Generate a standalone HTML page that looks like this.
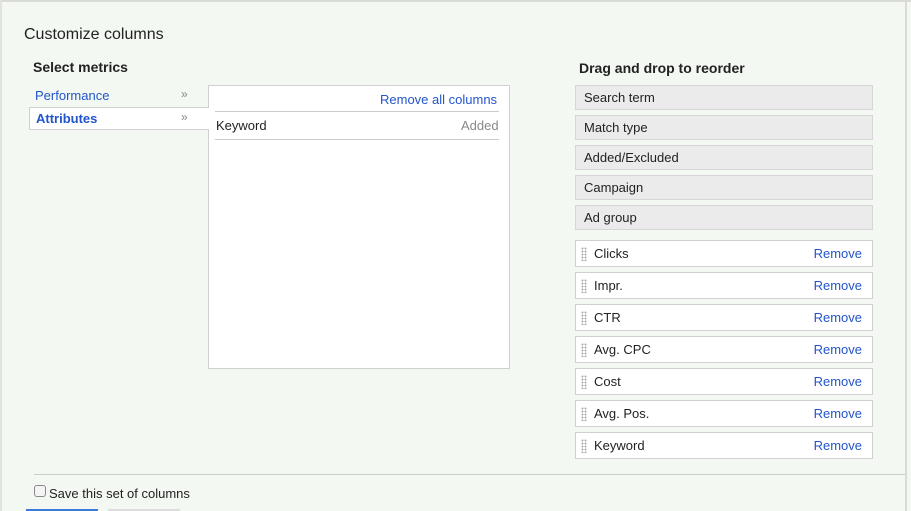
<!DOCTYPE html>
<html><head><style>
body{margin:0;width:911px;height:511px;overflow:hidden;background:#f4f8f2;font-family:"Liberation Sans",Arial,sans-serif;position:relative;font-size:13px;color:#222}
div{position:absolute;box-sizing:border-box}
.g{left:575px;width:298px;height:25px;background:#ebebeb;border:1px solid #d6d6d6;padding:4px 8px;color:#222}
.w{left:575px;width:298px;height:27px;background:#fff;border:1px solid #d0d0d0;padding:5px 0 0 18px}
.w span{position:absolute;right:10px;top:5px;color:#2255cc}
.w i{position:absolute;left:5px;top:6px;width:6px;height:14px;background-image:radial-gradient(circle,#aaa 0.9px,transparent 1.1px);background-size:3px 3px}
</style></head><body>
<div style="left:0;top:0;width:911px;height:2px;background:#d8dbd6"></div>
<div style="left:0;top:0;width:2px;height:511px;background:#e0e3de"></div>
<div style="left:905px;top:0;width:2px;height:511px;background:#d8dbd6"></div>
<div style="left:24px;top:26px;font-size:16px;color:#222">Customize columns</div>
<div style="left:33px;top:59px;font-size:14px;font-weight:bold">Select metrics</div>
<div style="left:35px;top:88px;color:#2255cc">Performance</div>
<div style="left:181px;top:87px;color:#888;font-size:12px">»</div>
<div style="left:29px;top:107px;width:181px;height:23px;background:#fff;border:1px solid #d0d0d0;border-right:none"></div>
<div style="left:36px;top:111px;color:#2255cc;font-weight:bold">Attributes</div>
<div style="left:181px;top:110px;color:#888;font-size:12px">»</div>
<div style="left:208px;top:85px;width:302px;height:284px;background:#fff;border:1px solid #d0d0d0"></div>
<div style="left:208px;top:108px;width:2px;height:21px;background:#fff"></div>
<div style="left:380px;top:92px;color:#2255cc">Remove all columns</div>
<div style="left:215px;top:111px;width:284px;height:1px;background:#ccc"></div>
<div style="left:216px;top:118px">Keyword</div>
<div style="left:461px;top:118px;color:#888">Added</div>
<div style="left:215px;top:139px;width:284px;height:1px;background:#ccc"></div>
<div style="left:579px;top:60px;font-size:14px;font-weight:bold">Drag and drop to reorder</div>
<div class="g" style="top:85px">Search term</div>
<div class="g" style="top:115px">Match type</div>
<div class="g" style="top:145px">Added/Excluded</div>
<div class="g" style="top:175px">Campaign</div>
<div class="g" style="top:205px">Ad group</div>
<div class="w" style="top:240px"><i></i>Clicks<span>Remove</span></div>
<div class="w" style="top:272px"><i></i>Impr.<span>Remove</span></div>
<div class="w" style="top:304px"><i></i>CTR<span>Remove</span></div>
<div class="w" style="top:336px"><i></i>Avg. CPC<span>Remove</span></div>
<div class="w" style="top:368px"><i></i>Cost<span>Remove</span></div>
<div class="w" style="top:400px"><i></i>Avg. Pos.<span>Remove</span></div>
<div class="w" style="top:432px"><i></i>Keyword<span>Remove</span></div>
<div style="left:34px;top:474px;width:871px;height:1px;background:#ccc"></div>
<div style="left:34px;top:485px;width:12px;height:12px;border:1px solid #888;border-radius:3px;background:#f4f4f4"></div>
<div style="left:49px;top:486px">Save this set of columns</div>
<div style="left:26px;top:509px;width:72px;height:2px;background:#3b7be0"></div>
<div style="left:108px;top:509px;width:72px;height:2px;background:#ddd"></div>
</body></html>
